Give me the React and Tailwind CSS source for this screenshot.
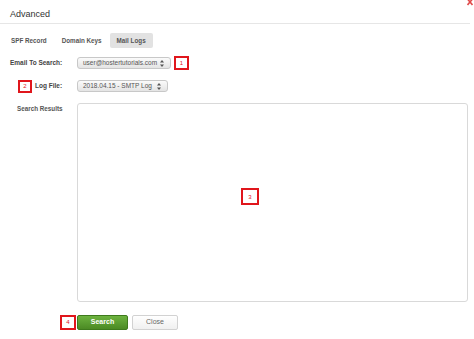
import React from "react";

function Arrows() {
  return (
    <svg width="4" height="7" viewBox="0 0 4 7" className="shrink-0">
      <path d="M2 0 L4 2.6 L0 2.6 Z" fill="#555" />
      <path d="M2 7 L4 4.4 L0 4.4 Z" fill="#555" />
    </svg>
  );
}

function Select({ text, w }) {
  return (
    <div
      className={`${w} h-[12px] flex items-center justify-between pl-[5px] pr-[6px] border border-[#c8c8c8] rounded-[3px] bg-gradient-to-b from-[#fbfbfb] to-[#e4e4e4] text-[6.5px] leading-[10px] text-[#555]`}
    >
      <span>{text}</span>
      <Arrows />
    </div>
  );
}

function Badge({ n, cls }) {
  return (
    <div
      className={`${cls} flex items-center justify-center border-2 border-[#e0161c] bg-white text-[6px] leading-none text-[#e0161c]`}
    >
      {n}
    </div>
  );
}

export default function App() {
  return (
    <div className="relative w-[474px] h-[339px] bg-white overflow-hidden font-['Liberation_Sans',Arial,sans-serif]">
      <svg
        width="6"
        height="8"
        viewBox="0 0 6 8"
        className="absolute top-[-2px] left-[467px]"
      >
        <path d="M0.5 1 L5.5 7 M5.5 1 L0.5 7" stroke="#e04a4a" strokeWidth="1.6" />
      </svg>

      <div className="w-[470px] h-[24px] pl-[10px] pt-[9px] border-b border-[#e6e6e6] text-[9px] leading-[10px] text-[#333]">
        Advanced
      </div>

      <div className="flex pl-[4px] mt-[9px] gap-[1px] text-[6.3px] font-bold text-[#555]">
        <div className="h-[15px] px-[7px] flex items-center">SPF Record</div>
        <div className="h-[15px] px-[7px] flex items-center">Domain Keys</div>
        <div className="h-[15px] px-[7px] flex items-center bg-[#e2e2e2] rounded-[2px]">
          Mail Logs
        </div>
      </div>

      <div className="flex flex-col pl-[10px] mt-[8px]">
        <div className="flex items-center h-[14px]">
          <div className="w-[67px] text-[6.5px] font-bold text-[#444]">Email To Search:</div>
          <Select text="user@hostertutorials.com" w="w-[94px]" />
          <Badge n="1" cls="ml-[3px] w-[15px] h-[14px]" />
        </div>

        <div className="flex items-center h-[14px] mt-[9px]">
          <div className="w-[67px] flex items-center pl-[8px]">
            <Badge n="2" cls="w-[14px] h-[13px]" />
            <span className="ml-[3px] text-[6.5px] font-bold text-[#444]">Log File:</span>
          </div>
          <Select text="2018.04.15 - SMTP Log" w="w-[91px]" />
        </div>

        <div className="flex mt-[10px]">
          <div className="w-[67px] pl-[7px] pt-[1px] text-[6.3px] text-[#555] font-bold">
            Search Results
          </div>
          <div className="relative w-[391px] h-[199px] border border-[#d9d9d9] rounded-[3px] bg-white">
            <Badge n="3" cls="absolute left-[163px] top-[84px] w-[18px] h-[17px]" />
          </div>
        </div>

        <div className="flex items-center h-[16px] mt-[12px]">
          <div className="w-[67px] flex justify-end pr-[1px]">
            <Badge n="4" cls="w-[16px] h-[15px]" />
          </div>
          <div className="w-[51px] h-[15px] flex items-center justify-center rounded-[2px] border border-[#3e7a1d] bg-gradient-to-b from-[#6db33f] to-[#4b8a24] text-[7px] font-bold text-white">
            Search
          </div>
          <div className="ml-[4px] w-[46px] h-[15px] flex items-center justify-center rounded-[2px] border border-[#d2d2d2] bg-gradient-to-b from-[#ffffff] to-[#f0f0f0] text-[7px] text-[#666]">
            Close
          </div>
        </div>
      </div>
    </div>
  );
}
